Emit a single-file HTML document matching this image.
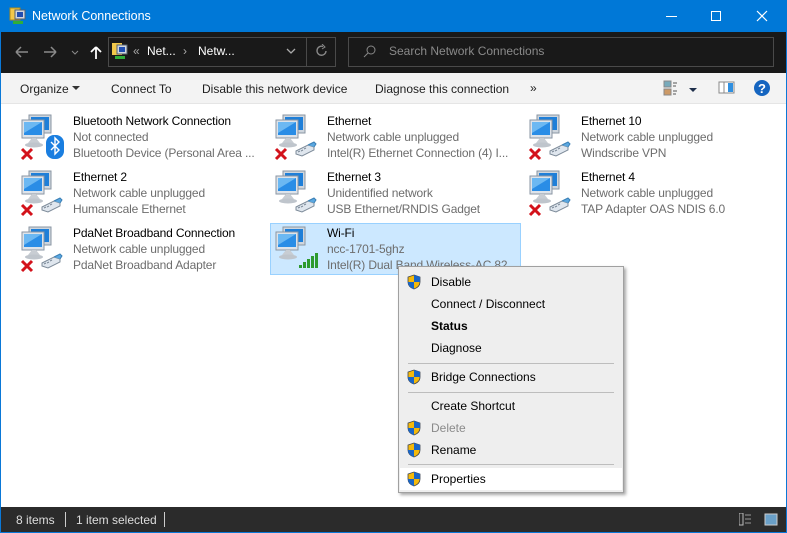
<!DOCTYPE html>
<html><head><style>
*{margin:0;padding:0;box-sizing:border-box}
body{width:787px;height:533px;overflow:hidden;font-family:"Liberation Sans",sans-serif;font-size:12px;background:#fff;position:relative}
.win{position:absolute;left:0;top:0;width:787px;height:533px;border:1px solid #0a78d7}
.title{position:absolute;left:0;top:0;width:787px;height:32px;background:#0078d7;color:#fff}
.addr{position:absolute;left:1px;top:32px;width:785px;height:41px;background:#191919}
.cmd{position:absolute;left:1px;top:73px;width:785px;height:31px;background:#f3f3f3;border-bottom:1px solid #e5e5e5;color:#1e1e1e}
.status{position:absolute;left:1px;top:507px;width:785px;height:25px;background:#2b2b2b;color:#ddd}
.a{position:absolute;white-space:nowrap}
.item{position:absolute;width:250px;height:52px;letter-spacing:-0.15px}
.item .n{position:absolute;left:53px;top:0;color:#000;line-height:16px}
.item .s{position:absolute;left:53px;top:16px;color:#6d6d6d;line-height:16px;white-space:nowrap}
.item .d{position:absolute;left:53px;top:32px;color:#6d6d6d;line-height:16px;white-space:nowrap}
.item svg{position:absolute;left:0;top:0}
.menu{position:absolute;left:398px;top:266px;width:226px;height:227px;background:#eeeeee;border:1px solid #a0a0a0;box-shadow:2px 2px 3px rgba(0,0,0,.35)}
.mi{position:absolute;left:32px;line-height:16px;color:#000}
.sep{position:absolute;left:9px;width:206px;height:1px;background:#bdbdbd}
.sh{position:absolute;left:8px}
</style></head><body>
<svg width="0" height="0" style="position:absolute">
<defs>
<g id="pc">
<rect x="9" y="2" width="22" height="18" fill="#cfd6de" stroke="#8a96a3"/>
<rect x="11" y="4" width="18" height="13" fill="#1f7fd8"/>
<rect x="2" y="7" width="22" height="18" fill="#dde3ea" stroke="#8a96a3"/>
<rect x="4" y="9" width="18" height="13" fill="#2a8de6"/>
<path d="M4 9 L22 9 L4 20Z" fill="#6cb8f2"/>
<path d="M8 30 L12 25 L16 25 L20 30 Z" fill="#c8cdd3"/>
<ellipse cx="14" cy="32" rx="9" ry="2.5" fill="#bfc5cc"/>
</g>
<g id="x"><path d="M2 2 L12 12 M12 2 L2 12" stroke="#d3121b" stroke-width="3"/></g>
<g id="plug"><path d="M2 10 L14 4 L20 6 L20 9 L8 15 L2 13Z" fill="#dfe6ee" stroke="#7d8b99"/><path d="M14 4 L20 1 L22 3 L20 6" fill="#5aa7e0" stroke="#3a7fb5"/><path d="M4 11 l2 -1 M7 10 l2 -1 M10 8 l2 -1" stroke="#7d8b99"/></g>
<g id="shield"><path d="M7 1 L13 3 L13 8 C13 12 10 14 7 15 C4 14 1 12 1 8 L1 3 Z" fill="#f5b90a" stroke="#3d4450" stroke-width=".8"/><path d="M7 1 L13 3 L13 8 L7 8Z M7 8 L1 8 C1 12 4 14 7 15Z" fill="#1a66c7"/></g>
</defs></svg>
<div class="win"></div>
<div class="title">
<svg class="a" style="left:9px;top:7px" width="18" height="18"><rect x="1" y="1" width="10" height="12" fill="#f1c84a" stroke="#b08a1a"/><rect x="6" y="3" width="10" height="9" fill="#cfd6de" stroke="#55606c"/><rect x="8" y="5" width="6" height="5" fill="#1f4db0"/><rect x="4" y="14" width="10" height="3" fill="#2fae3a"/></svg>
<div class="a" style="left:32px;top:9px;font-size:12.5px">Network Connections</div>
<div class="a" style="left:666px;top:16px;width:11px;height:1px;background:#fff"></div>
<div class="a" style="left:711px;top:11px;width:10px;height:10px;border:1px solid #fff"></div>
<svg class="a" style="left:756px;top:10px" width="12" height="12"><path d="M1 1L11 11M11 1L1 11" stroke="#fff" stroke-width="1.2"/></svg>
</div>
<div class="addr">
<svg class="a" style="left:13px;top:12px" width="92" height="16"><path d="M2 8H14M2 8L7 3M2 8L7 13" stroke="#8a8a8a" stroke-width="1.5" fill="none"/><path d="M30 8H42M42 8L37 3M42 8L37 13" stroke="#8a8a8a" stroke-width="1.5" fill="none"/><path d="M58 7L61 10L64 7" stroke="#8a8a8a" fill="none"/><path d="M82 3V15M82 3L77 8M82 3L87 8" stroke="#fff" stroke-width="1.8" fill="none"/></svg>
<div class="a" style="left:107px;top:5px;width:228px;height:30px;border:1px solid #4a4a4a"></div>
<svg class="a" style="left:110px;top:10px" width="18" height="18"><rect x="1" y="1" width="10" height="12" fill="#f1c84a"/><rect x="6" y="3" width="10" height="9" fill="#cfd6de" stroke="#55606c"/><rect x="8" y="5" width="6" height="5" fill="#1f4db0"/><rect x="4" y="14" width="10" height="3" fill="#2fae3a"/></svg>
<div class="a" style="left:132px;top:12px;color:#aaa">«</div>
<div class="a" style="left:146px;top:12px;color:#fff">Net...</div>
<div class="a" style="left:182px;top:12px;color:#aaa">›</div>
<div class="a" style="left:197px;top:12px;color:#fff">Netw...</div>
<svg class="a" style="left:285px;top:16px" width="10" height="8"><path d="M1 1L5 5L9 1" stroke="#aaa" fill="none" stroke-width="1.3"/></svg>
<div class="a" style="left:305px;top:6px;width:1px;height:28px;background:#4a4a4a"></div>
<svg class="a" style="left:314px;top:12px" width="14" height="14"><path d="M11 7A4.5 4.5 0 1 1 8 2.5" stroke="#888" fill="none" stroke-width="1.4"/><path d="M7 0L10 3L7 5" stroke="#888" fill="none"/></svg>
<div class="a" style="left:347px;top:5px;width:426px;height:30px;border:1px solid #4a4a4a"></div>
<svg class="a" style="left:362px;top:12px" width="14" height="14"><circle cx="8" cy="6" r="4" stroke="#888" fill="none"/><path d="M5 9L1 13" stroke="#888"/></svg>
<div class="a" style="left:388px;top:12px;color:#8a8a8a">Search Network Connections</div>
</div>
<div class="cmd">
<div class="a" style="left:19px;top:9px">Organize</div>
<svg class="a" style="left:71px;top:13px" width="8" height="5"><path d="M0 0H8L4 4Z" fill="#333"/></svg>
<div class="a" style="left:110px;top:9px">Connect To</div>
<div class="a" style="left:201px;top:9px">Disable this network device</div>
<div class="a" style="left:374px;top:9px">Diagnose this connection</div>
<div class="a" style="left:529px;top:8px">»</div>
<svg class="a" style="left:662px;top:7px" width="40" height="18"><rect x="1" y="1" width="7" height="6" fill="#7ab" stroke="#888"/><rect x="1" y="9" width="7" height="6" fill="#c96" stroke="#888"/><path d="M10 3h4M10 6h3M10 11h4M10 14h3" stroke="#555"/><path d="M26 8h8l-4 4z" fill="#1e2e4a"/></svg>
<svg class="a" style="left:717px;top:8px" width="18" height="14"><rect x="1" y="1" width="15" height="11" fill="#fff" stroke="#888"/><rect x="10" y="2" width="5" height="9" fill="#2f8fe0"/><path d="M6 1V12" stroke="#888"/></svg>
<svg class="a" style="left:752px;top:6px" width="18" height="18"><circle cx="9" cy="9" r="8" fill="#1565c0"/><text x="9" y="14" font-size="13" font-weight="bold" fill="#fff" text-anchor="middle" font-family="Liberation Sans">?</text></svg>
</div>

<div class="a" style="left:270px;top:223px;width:251px;height:52px;background:#cce8ff;border:1px solid #99d1ff"></div>

<div class="item" style="left:20px;top:113px"><svg width="52" height="52"><use href="#pc"/><g transform="translate(0,34)"><use href="#x"/></g><rect x="26" y="22" width="18" height="24" rx="8" fill="#1a7ee0"/><path d="M31 29L39 37L35 41V25L39 29L31 37" stroke="#fff" fill="none" stroke-width="1.4"/></svg>
<div class="n">Bluetooth Network Connection</div><div class="s">Not connected</div><div class="d">Bluetooth Device (Personal Area ...</div></div>
<div class="item" style="left:274px;top:113px"><svg width="52" height="52"><use href="#pc"/><g transform="translate(0,34)"><use href="#x"/></g><g transform="translate(20,28)"><use href="#plug"/></g></svg>
<div class="n">Ethernet</div><div class="s">Network cable unplugged</div><div class="d">Intel(R) Ethernet Connection (4) I...</div></div>
<div class="item" style="left:528px;top:113px"><svg width="52" height="52"><use href="#pc"/><g transform="translate(0,34)"><use href="#x"/></g><g transform="translate(20,28)"><use href="#plug"/></g></svg>
<div class="n">Ethernet 10</div><div class="s">Network cable unplugged</div><div class="d">Windscribe VPN</div></div>
<div class="item" style="left:20px;top:169px"><svg width="52" height="52"><use href="#pc"/><g transform="translate(0,34)"><use href="#x"/></g><g transform="translate(20,28)"><use href="#plug"/></g></svg>
<div class="n">Ethernet 2</div><div class="s">Network cable unplugged</div><div class="d">Humanscale Ethernet</div></div>
<div class="item" style="left:274px;top:169px"><svg width="52" height="52"><use href="#pc"/><g transform="translate(20,28)"><use href="#plug"/></g></svg>
<div class="n">Ethernet 3</div><div class="s">Unidentified network</div><div class="d">USB Ethernet/RNDIS Gadget</div></div>
<div class="item" style="left:528px;top:169px"><svg width="52" height="52"><use href="#pc"/><g transform="translate(0,34)"><use href="#x"/></g><g transform="translate(20,28)"><use href="#plug"/></g></svg>
<div class="n">Ethernet 4</div><div class="s">Network cable unplugged</div><div class="d">TAP Adapter OAS NDIS 6.0</div></div>
<div class="item" style="left:20px;top:225px"><svg width="52" height="52"><use href="#pc"/><g transform="translate(0,34)"><use href="#x"/></g><g transform="translate(20,28)"><use href="#plug"/></g></svg>
<div class="n">PdaNet Broadband Connection</div><div class="s">Network cable unplugged</div><div class="d">PdaNet Broadband Adapter</div></div>
<div class="item" style="left:274px;top:225px"><svg width="52" height="52"><use href="#pc"/><g fill="#2e9a2e"><rect x="25" y="40" width="3" height="3"/><rect x="29" y="37" width="3" height="6"/><rect x="33" y="34" width="3" height="9"/><rect x="37" y="31" width="3" height="12"/><rect x="41" y="28" width="3" height="15"/></g></svg>
<div class="n">Wi-Fi</div><div class="s">ncc-1701-5ghz</div><div class="d">Intel(R) Dual Band Wireless-AC 82</div></div>

<div class="menu">
<div class="a" style="left:1px;top:201px;width:222px;height:22px;background:#fff"></div>
<svg class="a sh" style="top:7px" width="14" height="16"><use href="#shield"/></svg><div class="mi" style="top:7px">Disable</div>
<div class="mi" style="top:29px">Connect / Disconnect</div>
<div class="mi" style="top:51px;font-weight:bold">Status</div>
<div class="mi" style="top:73px">Diagnose</div>
<div class="sep" style="top:96px"></div>
<svg class="a sh" style="top:102px" width="14" height="16"><use href="#shield"/></svg><div class="mi" style="top:102px">Bridge Connections</div>
<div class="sep" style="top:125px"></div>
<div class="mi" style="top:131px">Create Shortcut</div>
<svg class="a sh" style="top:153px" width="14" height="16"><use href="#shield"/></svg><div class="mi" style="top:153px;color:#8a8a8a">Delete</div>
<svg class="a sh" style="top:175px" width="14" height="16"><use href="#shield"/></svg><div class="mi" style="top:175px">Rename</div>
<div class="sep" style="top:197px"></div>
<svg class="a sh" style="top:204px" width="14" height="16"><use href="#shield"/></svg><div class="mi" style="top:204px">Properties</div>
</div>

<div class="status">
<div class="a" style="left:15px;top:6px">8 items</div>
<div class="a" style="left:64px;top:5px;width:1px;height:15px;background:#ccc"></div>
<div class="a" style="left:75px;top:6px">1 item selected</div>
<div class="a" style="left:163px;top:5px;width:1px;height:15px;background:#ccc"></div>
<svg class="a" style="left:738px;top:6px" width="40" height="14"><rect x="0" y="0" width="4" height="12" fill="none" stroke="#bbb"/><path d="M6 2h6M6 6h6M6 10h6" stroke="#999"/><rect x="26" y="1" width="12" height="11" fill="#6aa0c8" stroke="#ccc"/></svg>
</div>
</body></html>
